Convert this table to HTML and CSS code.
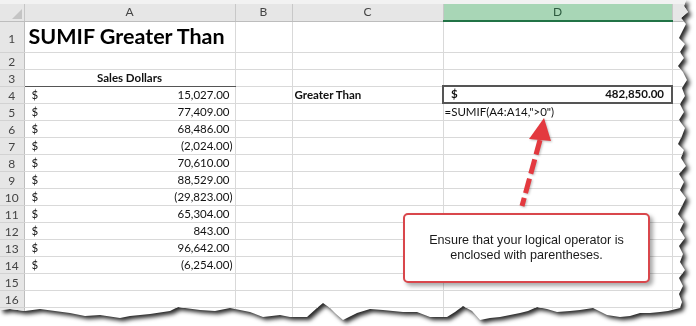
FILE: index.html
```html
<!DOCTYPE html>
<html>
<head>
<meta charset="utf-8">
<link rel="stylesheet" href="styles.css">
</head>
<body>
<div class="paper-wrap">
  <div class="paper">
    <table class="sheet">
      <colgroup>
        <col class="c-hdr"><col class="c-a"><col class="c-b"><col class="c-c"><col class="c-d"><col class="c-e">
      </colgroup>
      <tr class="r-head">
        <th class="corner"><svg class="tri" width="10" height="10" viewBox="0 0 10 10"><polygon points="10,0 10,10 0,10" fill="#c4c4c4"/></svg></th>
        <th class="colh">A</th><th class="colh">B</th><th class="colh">C</th><th class="colh sel">D</th><th class="colh"></th>
      </tr>
      <tr class="r-title"><th class="rowh">1</th><td class="title">SUMIF Greater Than</td><td></td><td></td><td></td><td></td></tr>
      <tr class="r"><th class="rowh">2</th><td></td><td></td><td></td><td></td><td></td></tr>
      <tr class="r"><th class="rowh">3</th><td class="colhead">Sales Dollars</td><td></td><td></td><td></td><td></td></tr>
      <tr class="r"><th class="rowh">4</th><td><div class="acct"><span>$</span><span class="pos">15,027.00</span></div></td><td></td><td class="label">Greater Than</td><td class="total"><div class="acct strong"><span>$</span><span>482,850.00</span></div></td><td></td></tr>
      <tr class="r"><th class="rowh">5</th><td><div class="acct"><span>$</span><span class="pos">77,409.00</span></div></td><td></td><td></td><td class="formula">=SUMIF(A4:A14,"&gt;0")</td><td></td></tr>
      <tr class="r"><th class="rowh">6</th><td><div class="acct"><span>$</span><span class="pos">68,486.00</span></div></td><td></td><td></td><td></td><td></td></tr>
      <tr class="r"><th class="rowh">7</th><td><div class="acct"><span>$</span><span class="neg">(2,024.00)</span></div></td><td></td><td></td><td></td><td></td></tr>
      <tr class="r"><th class="rowh">8</th><td><div class="acct"><span>$</span><span class="pos">70,610.00</span></div></td><td></td><td></td><td></td><td></td></tr>
      <tr class="r"><th class="rowh">9</th><td><div class="acct"><span>$</span><span class="pos">88,529.00</span></div></td><td></td><td></td><td></td><td></td></tr>
      <tr class="r"><th class="rowh">10</th><td><div class="acct"><span>$</span><span class="neg">(29,823.00)</span></div></td><td></td><td></td><td></td><td></td></tr>
      <tr class="r"><th class="rowh">11</th><td><div class="acct"><span>$</span><span class="pos">65,304.00</span></div></td><td></td><td></td><td></td><td></td></tr>
      <tr class="r"><th class="rowh">12</th><td><div class="acct"><span>$</span><span class="pos">843.00</span></div></td><td></td><td></td><td></td><td></td></tr>
      <tr class="r"><th class="rowh">13</th><td><div class="acct"><span>$</span><span class="pos">96,642.00</span></div></td><td></td><td></td><td></td><td></td></tr>
      <tr class="r"><th class="rowh">14</th><td><div class="acct"><span>$</span><span class="neg">(6,254.00)</span></div></td><td></td><td></td><td></td><td></td></tr>
      <tr class="r"><th class="rowh">15</th><td></td><td></td><td></td><td></td><td></td></tr>
      <tr class="r"><th class="rowh">16</th><td></td><td></td><td></td><td></td><td></td></tr>
      <tr class="r-last"><th class="rowh"></th><td></td><td></td><td></td><td></td><td></td></tr>
    </table>

    <svg class="arrow" width="50" height="104" viewBox="0 0 50 104">
      <line x1="31" y1="28" x2="13" y2="94" stroke="#e3393f" stroke-width="5" stroke-dasharray="15 5"/>
      <polygon points="35,6 20,27 42,29" fill="#e3393f"/>
    </svg>

    <div class="callout">
      <p>Ensure that your logical operator is<br>enclosed with parentheses.</p>
    </div>
  </div>
</div>
</body>
</html>
```
FILE: styles.css
```css
html, body {
  margin: 0;
  padding: 0;
  background: #fff;
}
body {
  width: 696px;
  height: 326px;
  overflow: hidden;
}
.paper-wrap {
  width: 696px;
  height: 326px;
  filter: drop-shadow(3px 3px 2px rgba(0, 0, 0, 0.85));
}
.paper {
  position: relative;
  width: 696px;
  height: 326px;
  background: #fff;
  overflow: hidden;
  clip-path: polygon(0 0, 686px 0, 684px 6px, 688px 12px, 681px 18px, 686px 24px, 683px 30px, 679px 38px, 685px 44px, 680px 52px, 684px 58px, 678px 66px, 683px 72px, 687px 80px, 682px 88px, 685px 96px, 680px 104px, 684px 112px, 679px 120px, 685px 128px, 682px 136px, 678px 144px, 684px 150px, 681px 158px, 686px 166px, 679px 174px, 684px 182px, 680px 190px, 686px 198px, 682px 206px, 678px 214px, 684px 222px, 680px 230px, 685px 238px, 679px 246px, 683px 254px, 680px 262px, 685px 270px, 679px 278px, 683px 286px, 679px 294px, 682px 302px, 680px 308px, 668px 311px, 660px 312px, 650px 313px, 640px 313px, 630px 316px, 620px 317px, 607px 315px, 593px 308px, 580px 310px, 570px 311px, 557px 312px, 547px 309px, 537px 307px, 528px 311px, 520px 313px, 510px 315px, 500px 317px, 490px 318px, 480px 320px, 472px 311px, 463px 306px, 455px 312px, 447px 317px, 430px 317px, 417px 312px, 403px 312px, 383px 310px, 370px 309px, 357px 313px, 343px 320px, 336px 314px, 330px 308px, 323px 303px, 317px 308px, 307px 317px, 290px 317px, 280px 315px, 263px 317px, 250px 312px, 230px 308px, 215px 311px, 200px 310px, 185px 308px, 178px 307px, 170px 311px, 150px 314px, 130px 316px, 120px 318px, 100px 315px, 85px 316px, 70px 313px, 55px 311px, 40px 309px, 25px 311px, 10px 309px, 0 310px);
}

.sheet {
  border-collapse: collapse;
  table-layout: fixed;
  width: 720px;
  font-family: Lato, "Open Sans", sans-serif;
  font-size: 11.5px;
  color: #111;
}
.c-hdr { width: 24px; }
.c-a { width: 211px; }
.c-b { width: 57px; }
.c-c { width: 151px; }
.c-d { width: 229px; }
.c-e { width: 48px; }

.sheet td {
  border: 1px solid #d9d9d9;
  padding: 0 2px 1px 2px;
  vertical-align: bottom;
  white-space: nowrap;
  overflow: hidden;
  line-height: 14px;
}
.sheet th {
  font-weight: normal;
  background: #e6e6e6;
  color: #444;
  padding: 0;
  font-size: 12px;
  line-height: 14px;
}

.r-head { height: 19px; }
.r-title { height: 31px; }
.r { height: 17px; }
.r-last { height: 30px; }

.corner {
  border-right: 1px solid #c6c6c6;
  border-bottom: 1px solid #bdbdbd;
  border-top: 4px solid #f2f2f2;
  text-align: right;
  vertical-align: bottom;
}
.tri {
  display: block;
  margin: 0 2px 2px auto;
}
.colh {
  border-top: 4px solid #f2f2f2;
  border-left: 1px solid #c8c8c8;
  border-right: 1px solid #c8c8c8;
  border-bottom: 1px solid #bdbdbd;
  text-align: center;
  vertical-align: middle;
}
.colh.sel {
  background: #a8d6b6;
  color: #2c5a3e;
  border-bottom: 2px solid #217346;
}
.rowh {
  border-right: 1px solid #bdbdbd;
  border-bottom: 1px solid #d2d2d2;
  text-align: center;
  vertical-align: bottom;
}
.r-title .rowh { padding-bottom: 6px; }

.sheet td.title {
  font-size: 21.5px;
  font-weight: 700;
  padding-left: 4px;
  padding-bottom: 5px;
  line-height: 22px;
  color: #000;
}
.sheet td.colhead {
  text-align: center;
  font-weight: 700;
  border-bottom: 1px solid #555;
}
.acct {
  display: flex;
  justify-content: space-between;
  padding-left: 5px;
}
.acct .pos { padding-right: 3px; }
.acct .neg { padding-right: 0; }
.acct.strong {
  font-weight: 700;
  padding-right: 5px;
}
.sheet td.label {
  font-weight: 700;
  padding-left: 2px;
}
.sheet td.total {
  border: 2px solid #555;
}
.sheet td.formula {
  padding-left: 1px;
}

.arrow {
  position: absolute;
  left: 509px;
  top: 112px;
  filter: drop-shadow(1px 1px 1px rgba(0, 0, 0, 0.25));
}
.callout {
  position: absolute;
  left: 403px;
  top: 213px;
  width: 243px;
  height: 66px;
  border: 2px solid #d9474c;
  border-radius: 5px;
  background: #fff;
  box-shadow: 3px 3px 4px rgba(0, 0, 0, 0.35);
  display: flex;
  align-items: center;
  justify-content: center;
}
.callout p {
  margin: 0;
  text-align: center;
  font-family: "Liberation Sans", Arial, sans-serif;
  font-size: 12.6px;
  line-height: 15px;
  color: #1a1a1a;
}
```
